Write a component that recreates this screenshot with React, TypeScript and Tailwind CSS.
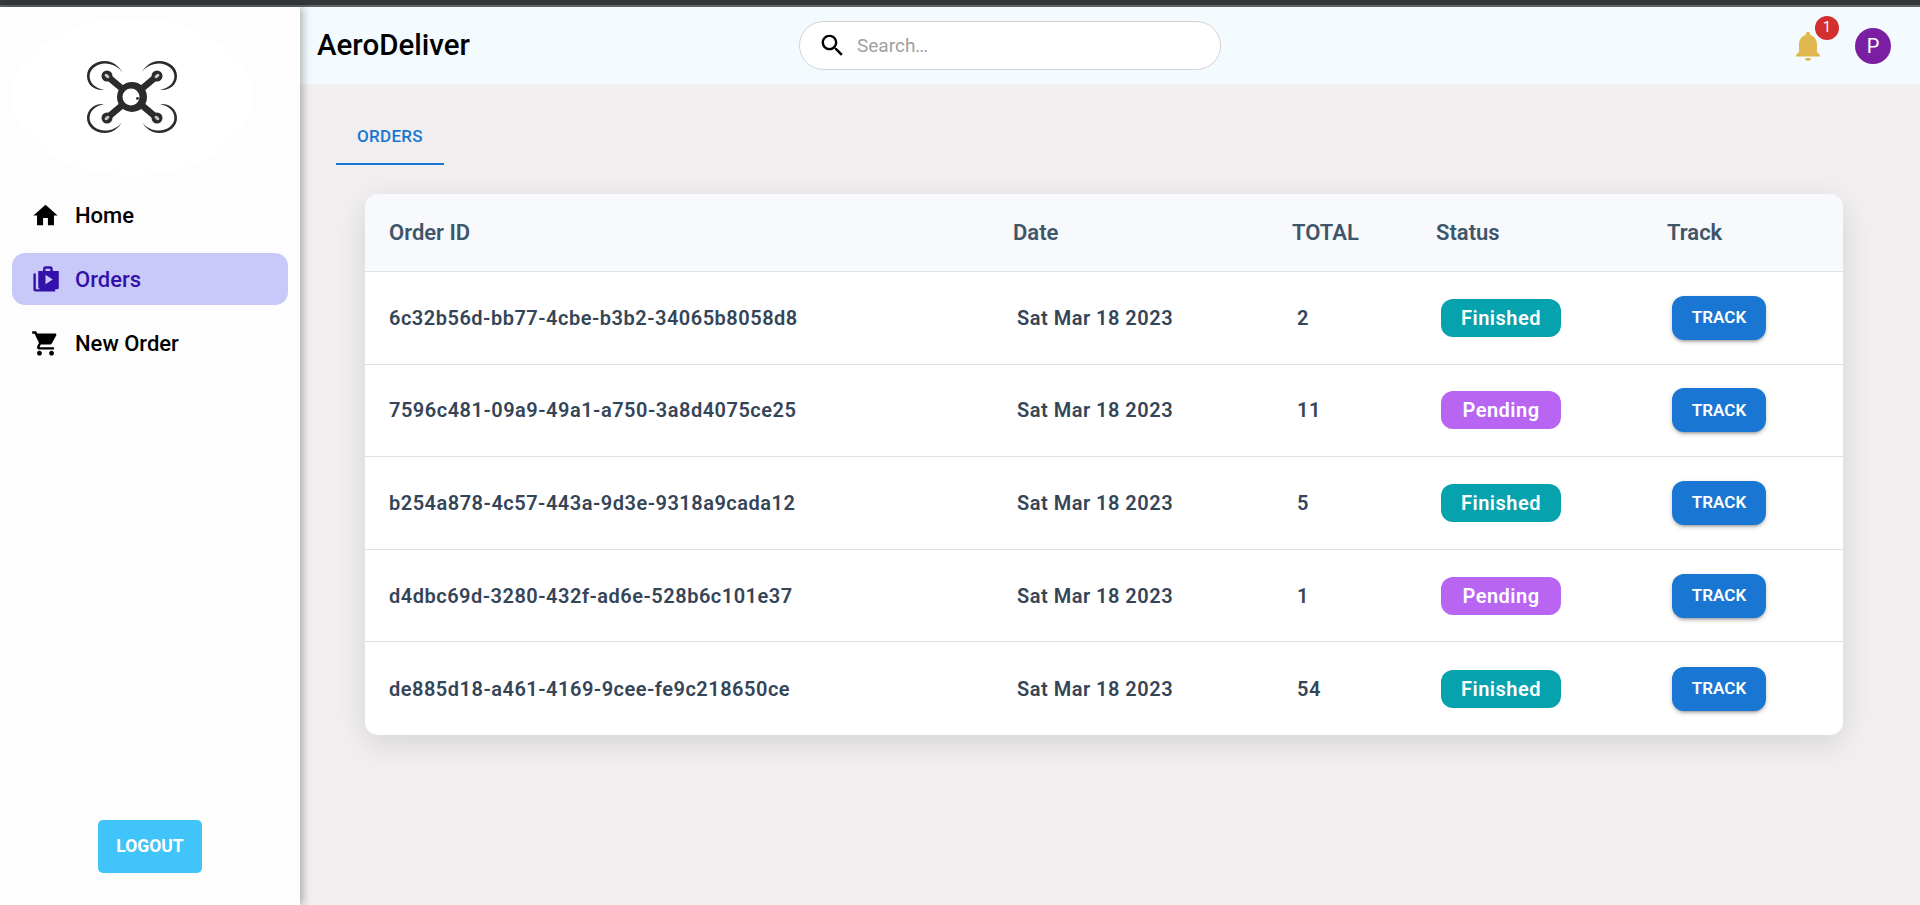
const HOME = 'M10 20v-6h4v6h5v-8h3L12 3 2 12h3v8z'
const CART =
  'M7 18c-1.1 0-1.99.9-1.99 2S5.9 22 7 22s2-.9 2-2-.9-2-2-2zM1 2v2h2l3.6 7.59-1.35 2.45c-.16.28-.25.61-.25.96 0 1.1.9 2 2 2h12v-2H7.42c-.14 0-.25-.11-.25-.25l.03-.12.9-1.83h7.45c.75 0 1.41-.41 1.75-1.03l3.58-6.47c.08-.14.12-.31.12-.48 0-.55-.45-1-1-1H5.21l-.94-2H1zm16 16c-1.1 0-1.99.9-1.99 2s.89 2 1.99 2 2-.9 2-2-.9-2-2-2z'
const SEARCH =
  'M15.5 14h-.79l-.28-.27C15.41 12.59 16 11.11 16 9.5 16 5.91 13.09 3 9.5 3S3 5.91 3 9.5 5.91 16 9.5 16c1.61 0 3.09-.59 4.23-1.57l.27.28v.79l5 4.99L20.49 19l-4.99-5zm-6 0C7.01 14 5 11.99 5 9.5S7.01 5 9.5 5 14 7.01 14 9.5 11.99 14 9.5 14z'
const BELL =
  'M12 22c1.1 0 2-.9 2-2h-4c0 1.1.89 2 2 2zm6-6v-5c0-3.07-1.64-5.64-4.5-6.32V4c0-.83-.67-1.5-1.5-1.5s-1.5.67-1.5 1.5v.68C7.63 5.36 6 7.92 6 11v5l-2 2v1h16v-1l-2-2z'
const CASES =
  'M4 7H2v13c0 1.1.9 2 2 2h16v-2H4V7zm14-2V3c0-1.1-.9-2-2-2h-4c-1.1 0-2 .9-2 2v2H6v13c0 1.1.9 2 2 2h14c.55 0 1-.45 1-1V5h-5zm-6-2h4v2h-4V3zm0 13V8l6 4-6 4z'

const orders = [
  { id: '6c32b56d-bb77-4cbe-b3b2-34065b8058d8', total: 2, status: 'Finished' },
  { id: '7596c481-09a9-49a1-a750-3a8d4075ce25', total: 11, status: 'Pending' },
  { id: 'b254a878-4c57-443a-9d3e-9318a9cada12', total: 5, status: 'Finished' },
  { id: 'd4dbc69d-3280-432f-ad6e-528b6c101e37', total: 1, status: 'Pending' },
  { id: 'de885d18-a461-4169-9cee-fe9c218650ce', total: 54, status: 'Finished' },
]

function Icon({ d, className }: { d: string; className?: string }) {
  return (
    <svg viewBox="0 0 24 24" fill="currentColor" className={className}>
      <path d={d} />
    </svg>
  )
}

function DroneLogo() {
  const rotor = 'M36 12 C31 4 25 0 18 0 C7 0 0 7 0 15 C0 24 8 30 17 29 C8 27 2.6 22 2.6 15 C2.6 8 10 2.4 18 2.4 C25 2.4 32 6 36 12Z'
  return (
    <svg viewBox="0 0 90 72" className="w-[90px] h-[72px]" fill="none">
      {/* arms */}
      <path d="M20 15 L70 57 M70 15 L20 57" stroke="#2b2b2b" strokeWidth="6.5" />
      {/* motors */}
      <circle cx="20" cy="15" r="5.5" fill="#2b2b2b" />
      <circle cx="70" cy="15" r="5.5" fill="#2b2b2b" />
      <circle cx="20" cy="57" r="5.5" fill="#2b2b2b" />
      <circle cx="70" cy="57" r="5.5" fill="#2b2b2b" />
      <ellipse cx="20" cy="15" rx="2.8" ry="1.6" transform="rotate(40 20 15)" fill="#c8c8c8" />
      <ellipse cx="70" cy="15" rx="2.8" ry="1.6" transform="rotate(-40 70 15)" fill="#c8c8c8" />
      <ellipse cx="20" cy="57" rx="2.8" ry="1.6" transform="rotate(-40 20 57)" fill="#c8c8c8" />
      <ellipse cx="70" cy="57" rx="2.8" ry="1.6" transform="rotate(40 70 57)" fill="#c8c8c8" />
      {/* hub */}
      <circle cx="45" cy="36" r="15" fill="#2b2b2b" />
      <circle cx="44" cy="36" r="8.5" fill="#fff" />
      <circle cx="50.5" cy="37.5" r="1.4" fill="#2b2b2b" />
      {/* rotors */}
      <path d={rotor} fill="#2b2b2b" />
      <path d={rotor} fill="#2b2b2b" transform="matrix(-1 0 0 1 90 0)" />
      <path d={rotor} fill="#2b2b2b" transform="matrix(1 0 0 -1 0 72)" />
      <path d={rotor} fill="#2b2b2b" transform="matrix(-1 0 0 -1 90 72)" />
    </svg>
  )
}

function NavItem({ icon, label, active }: { icon: string; label: string; active?: boolean }) {
  return (
    <div
      className={`flex items-center h-[52px] rounded-[13px] pl-[19px] gap-[15px] text-[22px] font-medium ${
        active ? 'bg-[#c9c9f9] text-[#3311aa]' : 'text-black'
      }`}
    >
      <Icon d={icon} className="w-[29px] h-[29px] shrink-0" />
      <span>{label}</span>
    </div>
  )
}

export default function App() {
  return (
    <div className="h-[905px] flex flex-col overflow-hidden bg-[#f1eff0] font-['Roboto',sans-serif]">
      <div className="h-[7px] shrink-0 bg-[#35363a] border-b-2 border-[#5f6368]" />
      <div className="flex flex-1 min-h-0">
        {/* Sidebar */}
        <aside className="relative z-10 w-[300px] shrink-0 bg-[#fdfdfd] shadow-[3px_0_8px_rgba(0,0,0,0.28)] px-3 flex flex-col">
          <div className="mt-[11px] h-[157px] w-[240px] rounded-[50%] bg-white flex items-center justify-center">
            <DroneLogo />
          </div>
          <nav className="mt-[14px] flex flex-col gap-[12px]">
            <NavItem icon={HOME} label="Home" />
            <NavItem icon={CASES} label="Orders" active />
            <NavItem icon={CART} label="New Order" />
          </nav>
          <button className="mt-auto mb-8 mx-auto w-[104px] h-[53px] rounded-[5px] bg-[#40c4f9] text-white text-[17.5px] font-bold">
            LOGOUT
          </button>
        </aside>

        <main className="flex-1 min-w-0 flex flex-col">
          {/* Header */}
          <header className="h-[77px] shrink-0 bg-[#f4fbfe] flex items-center relative pl-[17px]">
            <h1 className="text-[29.5px] font-medium text-black w-[482px]">AeroDeliver</h1>
            <div className="w-[422px] h-[49px] rounded-[25px] border border-[#cfd3d6] bg-white flex items-center pl-[18px] gap-[10px]">
              <Icon d={SEARCH} className="w-[29px] h-[29px] text-black" />
              <span className="text-[19px] text-[#a0a0a0] pt-[2px]">Search…</span>
            </div>
            <div className="ml-auto mr-[29px] flex items-center gap-[29px]">
              <div className="relative w-9 h-9">
                <Icon d={BELL} className="w-9 h-9 text-[#e0b84f]" />
                <span className="absolute -top-[12px] left-[25px] w-6 h-6 rounded-full bg-[#d32f2f] text-white text-[14px] flex items-center justify-center">
                  1
                </span>
              </div>
              <div className="w-9 h-9 rounded-full bg-[#7b1fa2] text-white text-[20px] flex items-center justify-center">
                P
              </div>
            </div>
          </header>

          {/* Tab */}
          <div className="pl-[36px] pt-[27px]">
            <div className="w-[108px] h-[54px] flex items-center justify-center border-b-2 border-[#1976d2] text-[#1976d2] text-[17px] font-medium tracking-[0.3px]">
              ORDERS
            </div>
          </div>

          {/* Orders table */}
          <div className="ml-[65px] mt-[29px] w-[1478px] rounded-[13px] bg-white overflow-hidden shadow-[0_8px_32px_rgba(0,0,0,0.12)]">
            <div className="grid grid-cols-[624px_279px_144px_231px_1fr] h-[78px] items-center pl-6 bg-[#f7f9fc] border-b border-[#dfe3e8] text-[22px] font-semibold text-[#3f5568]">
              <span>Order ID</span>
              <span>Date</span>
              <span>TOTAL</span>
              <span>Status</span>
              <span>Track</span>
            </div>
            {orders.map((o, i) => (
              <div
                key={o.id}
                className={`grid grid-cols-[624px_279px_144px_231px_1fr] h-[92.6px] items-center pl-6 text-[20px] font-semibold tracking-[0.5px] text-[#354558] ${
                  i < orders.length - 1 ? 'border-b border-[#e0e0e0]' : ''
                }`}
              >
                <span>{o.id}</span>
                <span className="pl-[4px]">Sat Mar 18 2023</span>
                <span className="pl-[5px]">{o.total}</span>
                <span className="pl-[5px]">
                  <span
                    className={`flex w-[120px] h-[38px] rounded-[12px] items-center justify-center text-white text-[20px] font-semibold ${
                      o.status === 'Finished' ? 'bg-[#06a2ad]' : 'bg-[#b865f2]'
                    }`}
                  >
                    {o.status}
                  </span>
                </span>
                <span className="pl-[5px]">
                  <button className="w-[94px] h-[44px] rounded-[12px] bg-[#1976d2] text-white text-[17px] font-semibold tracking-normal shadow-[0_3px_3px_-2px_rgba(0,0,0,0.3),0_2px_5px_rgba(0,0,0,0.2)]">
                    TRACK
                  </button>
                </span>
              </div>
            ))}
          </div>
        </main>
      </div>
    </div>
  )
}
